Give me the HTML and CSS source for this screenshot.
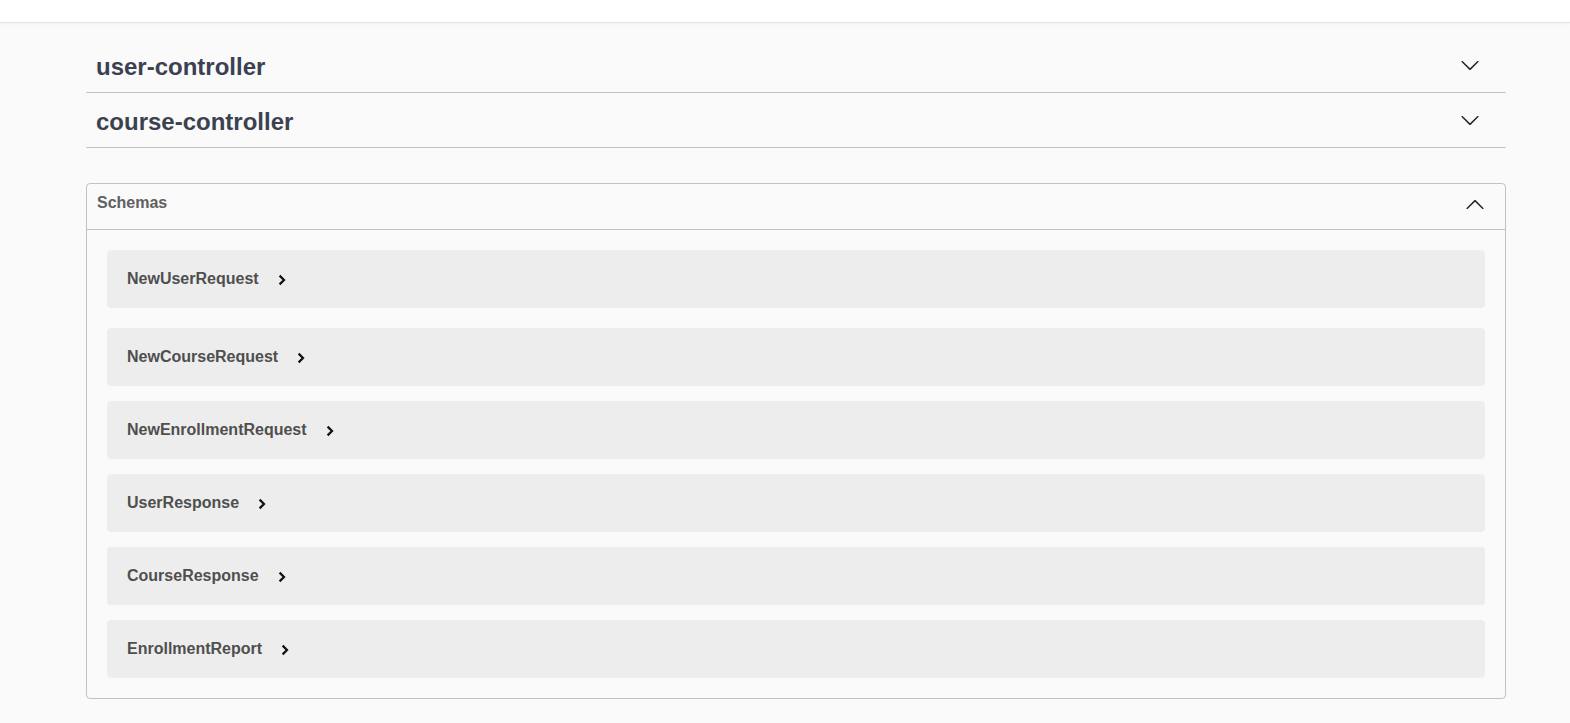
FILE: index.html
```html
<!DOCTYPE html>
<html>
<head>
<meta charset="utf-8">
<link rel="stylesheet" href="styles.css">
</head>
<body>
<div class="topbar"></div>
<div class="wrapper">
  <div class="tag">
    <h3 class="tag-title">user-controller</h3>
    <svg class="arrow" width="20" height="20" viewBox="0 0 20 20"><path d="M17.418 6.109c.272-.268.709-.268.979 0s.271.701 0 .969l-7.908 7.83c-.27.268-.707.268-.979 0l-7.908-7.830c-.27-.268-.27-.701 0-.969.271-.268.709-.268.979 0L10 13.25l7.418-7.141z"/></svg>
  </div>
  <div class="tag">
    <h3 class="tag-title">course-controller</h3>
    <svg class="arrow" width="20" height="20" viewBox="0 0 20 20"><path d="M17.418 6.109c.272-.268.709-.268.979 0s.271.701 0 .969l-7.908 7.83c-.27.268-.707.268-.979 0l-7.908-7.830c-.27-.268-.27-.701 0-.969.271-.268.709-.268.979 0L10 13.25l7.418-7.141z"/></svg>
  </div>

  <section class="models">
    <div class="models-head">
      <h4 class="models-title">Schemas</h4>
      <svg class="arrow" width="20" height="20" viewBox="0 0 20 20"><path d="M17.418 14.908c.272.268.709.268.979 0s.271-.701 0-.969l-7.908-7.83c-.27-.268-.707-.268-.979 0l-7.908 7.83c-.27.268-.27.701 0 .969.271.268.709.268.979 0L10 7.767l7.418 7.141z"/></svg>
    </div>
    <div class="models-body">
      <div class="model"><span class="model-title">NewUserRequest</span><svg class="toggle" width="8" height="12" viewBox="0 0 8 12"><path d="M1.6 1.6 L6 6 L1.6 10.4" fill="none" stroke="#111" stroke-width="2.2"/></svg></div>
      <div class="model"><span class="model-title">NewCourseRequest</span><svg class="toggle" width="8" height="12" viewBox="0 0 8 12"><path d="M1.6 1.6 L6 6 L1.6 10.4" fill="none" stroke="#111" stroke-width="2.2"/></svg></div>
      <div class="model"><span class="model-title">NewEnrollmentRequest</span><svg class="toggle" width="8" height="12" viewBox="0 0 8 12"><path d="M1.6 1.6 L6 6 L1.6 10.4" fill="none" stroke="#111" stroke-width="2.2"/></svg></div>
      <div class="model"><span class="model-title">UserResponse</span><svg class="toggle" width="8" height="12" viewBox="0 0 8 12"><path d="M1.6 1.6 L6 6 L1.6 10.4" fill="none" stroke="#111" stroke-width="2.2"/></svg></div>
      <div class="model"><span class="model-title">CourseResponse</span><svg class="toggle" width="8" height="12" viewBox="0 0 8 12"><path d="M1.6 1.6 L6 6 L1.6 10.4" fill="none" stroke="#111" stroke-width="2.2"/></svg></div>
      <div class="model"><span class="model-title">EnrollmentReport</span><svg class="toggle" width="8" height="12" viewBox="0 0 8 12"><path d="M1.6 1.6 L6 6 L1.6 10.4" fill="none" stroke="#111" stroke-width="2.2"/></svg></div>
    </div>
  </section>
</div>
</body>
</html>
```

FILE: styles.css
```css
* { box-sizing: border-box; }
html, body {
  margin: 0;
  padding: 0;
  background: #fafafa;
  font-family: "Liberation Sans", Arial, sans-serif;
}
.topbar {
  height: 23px;
  background: #ffffff;
  border-bottom: 1px solid #e3e3e3;
  box-shadow: 0 1px 2px rgba(0, 0, 0, 0.04);
}
.wrapper {
  width: 1420px;
  margin: 20px 0 0 86px;
}
.tag {
  display: flex;
  align-items: flex-start;
  justify-content: space-between;
  height: 50px;
  padding: 10px 26px 0 10px;
  margin-bottom: 5px;
  border-bottom: 1px solid rgba(59, 65, 81, 0.3);
}
.tag-title {
  margin: 0;
  font-size: 24px;
  font-weight: 700;
  color: #3b4151;
}
.tag .arrow {
  margin-top: 2px;
  fill: #222;
}
.models {
  margin-top: 35px;
  border: 1px solid rgba(59, 65, 81, 0.3);
  border-radius: 4px;
}
.models-head {
  display: flex;
  align-items: flex-start;
  justify-content: space-between;
  height: 46px;
  padding: 10px 20px 0 10px;
  border-bottom: 1px solid rgba(59, 65, 81, 0.3);
}
.models-title {
  margin: 0;
  font-size: 16px;
  font-weight: 700;
  color: #606060;
}
.models-head .arrow {
  fill: #222;
}
.models-body {
  padding: 20px 20px 20px;
  display: flex;
  flex-direction: column;
  gap: 15px;
}
.model {
  display: flex;
  align-items: center;
  height: 58px;
  padding-left: 20px;
  background: rgba(0, 0, 0, 0.05);
  border-radius: 4px;
}
.model:first-child {
  margin-bottom: 5px;
}
.model-title {
  font-size: 16px;
  font-weight: 700;
  color: #4f4f4f;
}
.toggle {
  margin-left: 19px;
  margin-top: 1px;
}
```
